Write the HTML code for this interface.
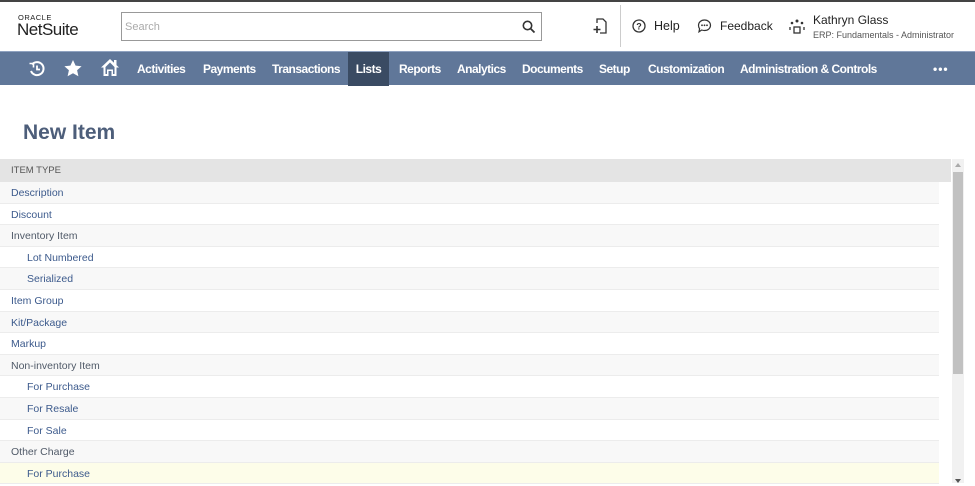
<!DOCTYPE html>
<html><head><meta charset="utf-8"><style>
*{margin:0;padding:0;box-sizing:border-box}
body{width:975px;height:483px;overflow:hidden;background:#fff;font-family:"Liberation Sans",Arial,sans-serif;position:relative}
.top{position:absolute;top:0;left:0;width:975px;height:2px;background:#444}
.abs{position:absolute}
.nav{position:absolute;top:51px;left:0;width:975px;height:34px;background:#607799;border-top:1px solid #8fa2c0}
.nav span{position:absolute;top:0;height:34px;line-height:34px;color:#fff;font-size:12px;font-weight:bold;letter-spacing:-0.5px}
.rows{position:absolute;left:0;top:159px}
.hdr{width:951px;height:23px;background:#e4e4e4;font-size:9.5px;color:#555;line-height:24px;padding-left:11px}
.r{width:939px;height:21.6px;line-height:23px;font-size:10.5px;border-bottom:1px solid #ececec;padding-left:11px;color:#3c5a8c}
.r.i{padding-left:27px}
.r.c{color:#505a68}
</style></head><body>
<div class="top"></div>
<div class="abs" style="left:18px;top:13px;font-size:7.5px;letter-spacing:0.5px;color:#222">ORACLE</div>
<div class="abs" style="left:17px;top:20px;font-size:17px;color:#222;letter-spacing:-0.5px">NetSuite</div>
<div class="abs" style="left:121px;top:12px;width:421px;height:29px;border:1px solid #999;background:#fff"><span style="position:absolute;left:3px;top:8px;font-size:11px;color:#aaa">Search</span>
<svg style="position:absolute;right:5px;top:7px" width="14" height="14" viewBox="0 0 14 14"><circle cx="5.5" cy="5.5" r="4.2" fill="none" stroke="#333" stroke-width="1.6"/><path d="M8.5 8.5L12.5 12.5" stroke="#333" stroke-width="1.8"/></svg></div>
<svg class="abs" style="left:593px;top:17px" width="15" height="18" viewBox="0 0 15 18"><path d="M4 6V2h6l3 3v11H7" fill="none" stroke="#333" stroke-width="1.3"/><path d="M4 9v7M0.5 12.5h7" stroke="#333" stroke-width="1.6"/></svg>
<div class="abs" style="left:620px;top:5px;width:1px;height:42px;background:#ccc"></div>
<svg class="abs" style="left:632px;top:19px" width="14" height="14" viewBox="0 0 14 14"><circle cx="7" cy="7" r="6" fill="none" stroke="#333" stroke-width="1.3"/><text x="7" y="10.5" font-size="9" text-anchor="middle" font-family="Liberation Sans" font-weight="bold" fill="#333">?</text></svg>
<div class="abs" style="left:654px;top:19px;font-size:12.5px;color:#222">Help</div>
<svg class="abs" style="left:697px;top:19px" width="15" height="14" viewBox="0 0 15 14"><path d="M7.5 1C11 1 13.5 3.3 13.5 6.3S11 11.5 7.5 11.5c-1 0-2-.2-2.8-.5L2 12.8l.6-3C1.8 8.8 1.5 7.6 1.5 6.3 1.5 3.3 4 1 7.5 1z" fill="none" stroke="#333" stroke-width="1.2"/><circle cx="5" cy="6.3" r=".9" fill="#333"/><circle cx="7.5" cy="6.3" r=".9" fill="#333"/><circle cx="10" cy="6.3" r=".9" fill="#333"/></svg>
<div class="abs" style="left:720px;top:19px;font-size:12px;color:#222">Feedback</div>
<svg class="abs" style="left:789px;top:18px" width="16" height="17" viewBox="0 0 16 17"><circle cx="8" cy="3" r="1.5" fill="#333"/><circle cx="3" cy="5" r="1.3" fill="#333"/><circle cx="13" cy="5" r="1.3" fill="#333"/><rect x="5" y="9" width="6" height="6" fill="none" stroke="#333" stroke-width="1.3"/><path d="M1 9v3M15 9v3" stroke="#333" stroke-width="1.3"/></svg>
<div class="abs" style="left:813px;top:13px;font-size:12px;color:#222">Kathryn Glass</div>
<div class="abs" style="left:813px;top:30px;font-size:9px;color:#555">ERP: Fundamentals - Administrator</div>
<div class="nav">
<svg style="position:absolute;left:28px;top:8px" width="18" height="18" viewBox="0 0 18 18"><path d="M4 4.5A6.5 6.5 0 1 1 3 11" fill="none" stroke="#fff" stroke-width="2"/><path d="M1.5 3.5h4v4" fill="none" stroke="#fff" stroke-width="1.6"/><path d="M9 5.5v4h3" fill="none" stroke="#fff" stroke-width="1.8"/></svg>
<svg style="position:absolute;left:64px;top:8px" width="18" height="17" viewBox="0 0 18 17"><path d="M9 0l2.6 5.6 6 .6-4.5 4.1 1.3 6L9 13.2 3.6 16.3l1.3-6L.4 6.2l6-.6z" fill="#fff"/></svg>
<svg style="position:absolute;left:100px;top:6px" width="20" height="19" viewBox="0 0 20 19"><path d="M10 1L1 9.5h2.5V18h5v-5h3v5h5V9.5H19z" fill="#fff"/><path d="M10 4.5L5.5 9v7h1.5v-4.5h6V16h1.5V9z" fill="#607799"/><rect x="14" y="2" width="2.5" height="5" fill="#fff"/></svg>
<span style="left:137px">Activities</span><span style="left:203px">Payments</span><span style="left:272px">Transactions</span>
<span style="left:348px;width:41px;background:#3a4b63;text-align:center">Lists</span>
<span style="left:399px">Reports</span><span style="left:457px">Analytics</span><span style="left:522px">Documents</span><span style="left:599px">Setup</span><span style="left:648px">Customization</span><span style="left:740px">Administration &amp; Controls</span><span style="left:933px;letter-spacing:1px">•••</span>
</div>
<div class="abs" style="left:23px;top:121px;font-size:21px;font-weight:bold;color:#4d5e7a">New Item</div>
<div class="rows">
<div class="hdr">ITEM TYPE</div>
<div class="r" style="background:#f8f8f8">Description</div>
<div class="r" style="background:#fff">Discount</div>
<div class="r c" style="background:#f8f8f8">Inventory Item</div>
<div class="r i" style="background:#fff">Lot Numbered</div>
<div class="r i" style="background:#f8f8f8">Serialized</div>
<div class="r" style="background:#fff">Item Group</div>
<div class="r" style="background:#f8f8f8">Kit/Package</div>
<div class="r" style="background:#fff">Markup</div>
<div class="r c" style="background:#f8f8f8">Non-inventory Item</div>
<div class="r i" style="background:#fff">For Purchase</div>
<div class="r i" style="background:#f8f8f8">For Resale</div>
<div class="r i" style="background:#fff">For Sale</div>
<div class="r c" style="background:#f8f8f8">Other Charge</div>
<div class="r i" style="background:#fdfde9">For Purchase</div>
</div>
<div class="abs" style="left:952px;top:159px;width:12px;height:324px;background:#f1f1f1"></div>
<div class="abs" style="left:953px;top:172px;width:10px;height:202px;background:#c1c1c1"></div>
<div class="abs" style="left:955px;top:163px;width:0;height:0;border-left:3px solid transparent;border-right:3px solid transparent;border-bottom:4px solid #aaa"></div>
<div class="abs" style="left:955px;top:479px;width:0;height:0;border-left:3px solid transparent;border-right:3px solid transparent;border-top:4px solid #555"></div>
</body></html>
